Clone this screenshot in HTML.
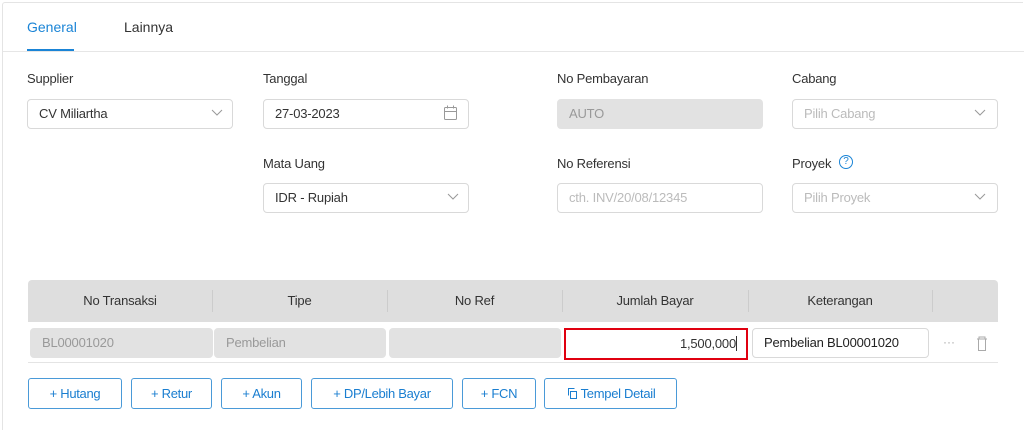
<!DOCTYPE html><html style="height:430px;overflow:hidden"><head><style>
body{margin:0;width:1024px;height:430px;background:#fff;font-family:"Liberation Sans",sans-serif;font-size:13px;color:#333;position:relative;overflow:hidden}
.a{position:absolute}
.frame{left:2px;top:2px;width:1021px;height:428px;border:1px solid #e4e4e4;border-bottom:none;border-right:none;border-radius:3px 0 0 0;box-sizing:border-box}
.lbl{font-size:13px;color:#333;letter-spacing:-0.2px}
.in{height:28px;border:1px solid #d9d9d9;border-radius:4px;box-sizing:content-box;line-height:28px;padding-left:11px;font-size:13px;background:#fff;letter-spacing:-0.2px}
.ph{color:#bbb}
.dis{background:#e2e2e2;border-color:#e2e2e2;color:#999}
.th{top:280px;height:42px;background:#dedede;line-height:42px;text-align:center;font-size:13px;color:#333;letter-spacing:-0.2px}
.sep{top:290px;width:1px;height:22px;background:#ccc}
.btn{top:378px;border:1px solid #4a9ad8;border-radius:3px;color:#1a7ed0;line-height:29px;text-align:center;font-size:13px;box-sizing:border-box;height:31px;letter-spacing:-0.3px}
</style></head><body>
<div class="a frame"></div>
<div class="a" style="left:27px;top:19px;color:#1a84d6;font-size:14px">General</div>
<div class="a" style="left:124px;top:19px;font-size:14px">Lainnya</div>
<div class="a" style="left:3px;top:51px;width:1021px;height:1px;background:#e6e6e6"></div>
<div class="a" style="left:27px;top:49px;width:47px;height:2px;background:#1a84d6"></div>

<div class="a lbl" style="left:27px;top:71px">Supplier</div>
<div class="a lbl" style="left:263px;top:71px">Tanggal</div>
<div class="a lbl" style="left:557px;top:71px">No Pembayaran</div>
<div class="a lbl" style="left:792px;top:71px">Cabang</div>
<div class="a in" style="left:27px;top:99px;width:193px">CV Miliartha</div>
<div class="a in" style="left:263px;top:99px;width:193px">27-03-2023</div>
<div class="a in dis" style="left:557px;top:99px;width:193px">AUTO</div>
<div class="a in ph" style="left:792px;top:99px;width:193px">Pilih Cabang</div>

<div class="a lbl" style="left:263px;top:156px">Mata Uang</div>
<div class="a lbl" style="left:557px;top:156px">No Referensi</div>
<div class="a lbl" style="left:792px;top:156px">Proyek</div>
<div class="a" style="left:839px;top:155px;width:12px;height:12px;border:1px solid #1a84d6;border-radius:50%;color:#1a84d6;font-size:10px;line-height:12px;text-align:center">?</div>
<div class="a in" style="left:263px;top:183px;width:193px">IDR - Rupiah</div>
<div class="a in ph" style="left:557px;top:183px;width:193px">cth. INV/20/08/12345</div>
<div class="a in ph" style="left:792px;top:183px;width:193px">Pilih Proyek</div>

<svg class="a" style="left:0;top:0" width="1024" height="430" fill="none" stroke="#999" stroke-width="1">
<path d="M212 110l5 5 5-5M448 194l5 5 5-5M975 110l5 5 5-5M975 194l5 5 5-5"/>
<rect x="444.5" y="107.5" width="12" height="12" rx="1"/><path d="M444.5 111.5h12M447.5 105.5v3M453.5 105.5v3"/>
<path d="M977 339h10M979 339v-2h6v2M978.5 339.5v11h7v-11" stroke="#aaa"/>
</svg>

<div class="a th" style="left:28px;width:184px;border-radius:4px 0 0 0">No Transaksi</div>
<div class="a th" style="left:212px;width:175px">Tipe</div>
<div class="a th" style="left:387px;width:175px">No Ref</div>
<div class="a th" style="left:562px;width:186px">Jumlah Bayar</div>
<div class="a th" style="left:748px;width:184px">Keterangan</div>
<div class="a th" style="left:932px;width:66px;border-radius:0 4px 0 0"></div>
<div class="a sep" style="left:212px"></div><div class="a sep" style="left:387px"></div><div class="a sep" style="left:562px"></div><div class="a sep" style="left:748px"></div><div class="a sep" style="left:932px"></div>

<div class="a in dis" style="left:30px;top:328px;width:170px">BL00001020</div>
<div class="a in dis" style="left:214px;top:328px;width:159px">Pembelian</div>
<div class="a in dis" style="left:389px;top:328px;width:159px"></div>
<div class="a" style="left:564px;top:328px;width:180px;height:28px;border:2px solid #e00010;line-height:28px;text-align:right;box-sizing:content-box;letter-spacing:-0.2px"><span style="margin-right:9px">1,500,000<span style="border-right:1px solid #333"></span></span></div>
<div class="a in" style="left:752px;top:328px;width:164px;color:#222">Pembelian BL00001020</div>
<div class="a" style="left:943px;top:335px;color:#aaa;font-size:12px">···</div>
<div class="a" style="left:28px;top:362px;width:970px;height:1px;background:#e4e4e4"></div>

<div class="a btn" style="left:28px;width:94px">+ Hutang</div>
<div class="a btn" style="left:131px;width:81px">+ Retur</div>
<div class="a btn" style="left:221px;width:81px">+ Akun</div>
<div class="a btn" style="left:311px;width:142px">+ DP/Lebih Bayar</div>
<div class="a btn" style="left:462px;width:74px">+ FCN</div>
<div class="a btn" style="left:544px;width:133px"><svg width="12" height="12" style="vertical-align:-1px" fill="none" stroke="#1a7ed0"><rect x="4.5" y="4.5" width="6" height="7"/><path d="M2.5 8.5v-7h6"/></svg> Tempel Detail</div>
</body></html>
